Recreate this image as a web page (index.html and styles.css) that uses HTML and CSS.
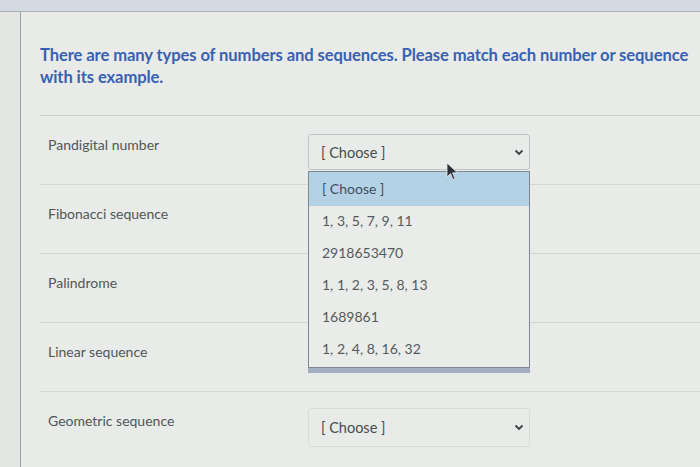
FILE: index.html
```html
<!DOCTYPE html>
<html>
<head>
<meta charset="utf-8">
<link rel="stylesheet" href="styles.css">
</head>
<body>
<div class="topbar"></div>
<div class="page">
  <div class="gutter"></div>
  <div class="main">
    <p class="question">There are many types of numbers and sequences. Please match each number or sequence with its example.</p>
    <div class="rows">
      <div class="row r1">
        <div class="label">Pandigital number</div>
        <div class="answer">
          <div class="select open">
            <span>[ Choose ]</span>
            <svg class="chev" width="10" height="7" viewBox="0 0 10 7"><path d="M1.5 1.5 L5 5 L8.5 1.5" fill="none" stroke="#3c4248" stroke-width="1.8"/></svg>
          </div>
          <ul class="menu">
            <li class="hl">[ Choose ]</li>
            <li>1, 3, 5, 7, 9, 11</li>
            <li>2918653470</li>
            <li>1, 1, 2, 3, 5, 8, 13</li>
            <li>1689861</li>
            <li>1, 2, 4, 8, 16, 32</li>
          </ul>
          <svg class="cursor" width="14" height="19" viewBox="0 0 14 19"><path d="M1 1 L1 15 L4.5 11.5 L7 17.5 L9 16.6 L6.6 10.8 L11.5 10.8 Z" fill="#2b2f35" stroke="#e6e9ec" stroke-width="0.8"/></svg>
        </div>
      </div>
      <div class="row">
        <div class="label">Fibonacci sequence</div>
        <div class="answer"></div>
      </div>
      <div class="row">
        <div class="label">Palindrome</div>
        <div class="answer"></div>
      </div>
      <div class="row">
        <div class="label">Linear sequence</div>
        <div class="answer"></div>
      </div>
      <div class="row r5">
        <div class="label">Geometric sequence</div>
        <div class="answer">
          <div class="select">
            <span>[ Choose ]</span>
            <svg class="chev" width="10" height="7" viewBox="0 0 10 7"><path d="M1.5 1.5 L5 5 L8.5 1.5" fill="none" stroke="#3c4248" stroke-width="1.8"/></svg>
          </div>
        </div>
      </div>
    </div>
  </div>
</div>
</body>
</html>
```
FILE: styles.css
```css
html, body {
  margin: 0;
  padding: 0;
}
body {
  width: 700px;
  height: 467px;
  overflow: hidden;
  background: #e8ebe7;
  font-family: Lato, "Open Sans", sans-serif;
}
.topbar {
  height: 11px;
  background: #d3dae1;
  border-bottom: 1px solid #a7aeb5;
}
.page {
  display: flex;
  height: 455px;
}
.gutter {
  width: 20px;
  flex: none;
  background: #e4e6e3;
  border-right: 1px solid #9da2a4;
}
.main {
  flex: 1;
  padding-left: 19px;
}
.question {
  margin: 32px 0 0 0;
  width: 660px;
  font-size: 16.6px;
  font-weight: 700;
  line-height: 22px;
  color: #3961b2;
  letter-spacing: -0.1px;
}
.rows {
  margin-top: 27px;
  border-top: 1px solid #cfd3cf;
}
.row {
  display: flex;
  height: 68px;
  border-bottom: 1px solid #d3d7d3;
}
.row.r5 {
  border-bottom: none;
}
.label {
  width: 260px;
  padding-left: 8px;
  padding-top: 20px;
  font-size: 14px;
  color: #50565b;
}
.answer {
  position: relative;
  width: 222px;
}
.r1 .answer {
  padding-top: 18px;
}
.r5 .answer {
  padding-top: 16px;
}
.select {
  height: 36px;
  box-sizing: border-box;
  border: 1px solid #bfc4c7;
  border-radius: 3px;
  display: flex;
  align-items: center;
  justify-content: space-between;
  padding: 0 5px 0 12px;
  font-size: 14.5px;
  color: #454b50;
}
.r5 .select {
  height: 39px;
  border-color: #d8dbd8;
}
.menu {
  position: absolute;
  left: 0;
  top: 55px;
  width: 222px;
  margin: 0;
  padding: 0 0 1px 0;
  list-style: none;
  box-sizing: border-box;
  border: 1px solid #7e8893;
  background: #e9ece8;
  box-shadow: 0 5px 0 #a3afc1;
  z-index: 2;
}
.menu li {
  height: 32px;
  line-height: 30px;
  padding-left: 13px;
  font-size: 14px;
  color: #545a5f;
}
.menu li.hl {
  height: 34px;
  line-height: 34px;
  background: #b4d2e6;
  color: #3e4e5e;
}
.cursor {
  position: absolute;
  left: 138px;
  top: 46px;
  z-index: 3;
}
```
